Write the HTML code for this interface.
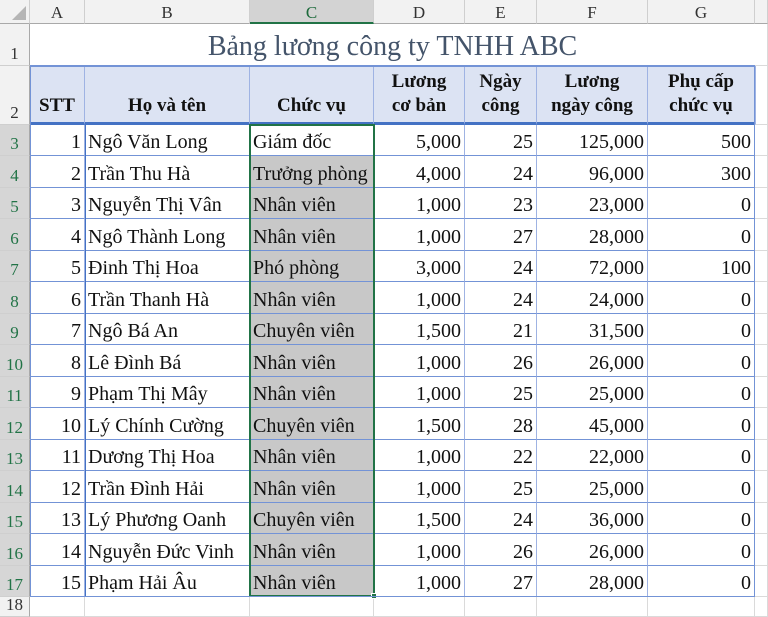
<!DOCTYPE html>
<html><head><meta charset="utf-8"><style>
*{box-sizing:border-box;margin:0;padding:0}
body{width:768px;height:606px;overflow:hidden;background:#fff;font-family:"Liberation Serif",serif;position:relative}
.g{position:absolute;left:0;top:0;display:grid;grid-template-columns:30px 55px 165px 124px 91px 72px 111px 107px 13px;grid-template-rows:24px 42px 59px repeat(15,31.47px) 20px}
.g>div{border-right:1px solid #dadada;border-bottom:1px solid #dadada;white-space:nowrap;overflow:visible;font-size:20px;color:#111;line-height:1}
.ch{background:#f2f2f2;border-color:#cfcfcf!important;text-align:center;font-size:17px!important;color:#333!important;padding-top:4px;border-bottom:1px solid #a9a9a9!important}
.ch.sel{background:#d3d3d3;color:#1e6b3c!important;border-bottom:2px solid #217346!important}
.rh{background:#f2f2f2;border-color:#cfcfcf!important;border-right:1px solid #a9a9a9!important;text-align:center;font-size:17px!important;color:#333!important;display:flex;align-items:flex-end;justify-content:center;padding-bottom:3px}
.rh.s{background:#d6d6d6;color:#217346!important}
.h{background:#dce3f3;font-weight:bold;font-size:19px!important;text-align:center;display:flex;align-items:flex-end;justify-content:center;padding-bottom:3px;line-height:1.3!important;border-right:1px solid #9fb3e3!important;border-bottom:3px solid #4472c4!important}
.c{border-right:1px solid #9fb3e3!important;border-bottom:1px solid #7393d6!important;display:flex;align-items:flex-end;padding:0 3px 3px 3px}
.r{justify-content:flex-end}
.gs{background:#c8c8c8}
.title{grid-column:2/9;text-align:center;font-size:28px!important;color:#44546a!important;padding-top:9px;border-right:none!important;border-bottom:1px solid #7393d6!important}
</style></head><body>
<div class="g">
<div class="ch" style="position:relative"><span style="position:absolute;right:3px;bottom:3px;width:0;height:0;border-left:14px solid transparent;border-bottom:14px solid #b5b5b5"></span></div>
<div class="ch">A</div><div class="ch">B</div><div class="ch sel">C</div><div class="ch">D</div><div class="ch">E</div><div class="ch">F</div><div class="ch">G</div><div class="ch"></div>

<div class="rh">1</div><div class="title">Bảng lương công ty TNHH ABC</div><div></div>

<div class="rh">2</div><div class="h">STT</div><div class="h">Họ và tên</div><div class="h">Chức vụ</div><div class="h">Lương<br>cơ bản</div><div class="h">Ngày<br>công</div><div class="h">Lương<br>ngày công</div><div class="h">Phụ cấp<br>chức vụ</div><div style="border-left:1px solid #9fb3e3"></div>

<div class="rh s">3</div><div class="c r">1</div><div class="c">Ngô Văn Long</div><div class="c">Giám đốc</div><div class="c r">5,000</div><div class="c r">25</div><div class="c r">125,000</div><div class="c r">500</div><div></div>
<div class="rh s">4</div><div class="c r">2</div><div class="c">Trần Thu Hà</div><div class="c gs">Trưởng phòng</div><div class="c r">4,000</div><div class="c r">24</div><div class="c r">96,000</div><div class="c r">300</div><div></div>
<div class="rh s">5</div><div class="c r">3</div><div class="c">Nguyễn Thị Vân</div><div class="c gs">Nhân viên</div><div class="c r">1,000</div><div class="c r">23</div><div class="c r">23,000</div><div class="c r">0</div><div></div>
<div class="rh s">6</div><div class="c r">4</div><div class="c">Ngô Thành Long</div><div class="c gs">Nhân viên</div><div class="c r">1,000</div><div class="c r">27</div><div class="c r">28,000</div><div class="c r">0</div><div></div>
<div class="rh s">7</div><div class="c r">5</div><div class="c">Đinh Thị Hoa</div><div class="c gs">Phó phòng</div><div class="c r">3,000</div><div class="c r">24</div><div class="c r">72,000</div><div class="c r">100</div><div></div>
<div class="rh s">8</div><div class="c r">6</div><div class="c">Trần Thanh Hà</div><div class="c gs">Nhân viên</div><div class="c r">1,000</div><div class="c r">24</div><div class="c r">24,000</div><div class="c r">0</div><div></div>
<div class="rh s">9</div><div class="c r">7</div><div class="c">Ngô Bá An</div><div class="c gs">Chuyên viên</div><div class="c r">1,500</div><div class="c r">21</div><div class="c r">31,500</div><div class="c r">0</div><div></div>
<div class="rh s">10</div><div class="c r">8</div><div class="c">Lê Đình Bá</div><div class="c gs">Nhân viên</div><div class="c r">1,000</div><div class="c r">26</div><div class="c r">26,000</div><div class="c r">0</div><div></div>
<div class="rh s">11</div><div class="c r">9</div><div class="c">Phạm Thị Mây</div><div class="c gs">Nhân viên</div><div class="c r">1,000</div><div class="c r">25</div><div class="c r">25,000</div><div class="c r">0</div><div></div>
<div class="rh s">12</div><div class="c r">10</div><div class="c">Lý Chính Cường</div><div class="c gs">Chuyên viên</div><div class="c r">1,500</div><div class="c r">28</div><div class="c r">45,000</div><div class="c r">0</div><div></div>
<div class="rh s">13</div><div class="c r">11</div><div class="c">Dương Thị Hoa</div><div class="c gs">Nhân viên</div><div class="c r">1,000</div><div class="c r">22</div><div class="c r">22,000</div><div class="c r">0</div><div></div>
<div class="rh s">14</div><div class="c r">12</div><div class="c">Trần Đình Hải</div><div class="c gs">Nhân viên</div><div class="c r">1,000</div><div class="c r">25</div><div class="c r">25,000</div><div class="c r">0</div><div></div>
<div class="rh s">15</div><div class="c r">13</div><div class="c">Lý Phương Oanh</div><div class="c gs">Chuyên viên</div><div class="c r">1,500</div><div class="c r">24</div><div class="c r">36,000</div><div class="c r">0</div><div></div>
<div class="rh s">16</div><div class="c r">14</div><div class="c">Nguyễn Đức Vinh</div><div class="c gs">Nhân viên</div><div class="c r">1,000</div><div class="c r">26</div><div class="c r">26,000</div><div class="c r">0</div><div></div>
<div class="rh s">17</div><div class="c r">15</div><div class="c">Phạm Hải Âu</div><div class="c gs">Nhân viên</div><div class="c r">1,000</div><div class="c r">27</div><div class="c r">28,000</div><div class="c r">0</div><div></div>
<div class="rh">18</div><div></div><div></div><div></div><div></div><div></div><div></div><div></div><div></div>
</div>
<div style="position:absolute;left:249px;top:124px;width:126px;height:473px;border:2px solid #217346"></div>
<div style="position:absolute;left:371px;top:593px;width:6px;height:6px;background:#217346;border:1px solid #fff"></div>
<div style="position:absolute;left:85px;top:124px;width:670px;height:473px;border-left:1px solid #4472c4;border-right:1px solid #4472c4;pointer-events:none"></div>
<div style="position:absolute;left:30px;top:66px;width:725px;height:531px;border:1px solid #7393d6;pointer-events:none"></div>
</body></html>
